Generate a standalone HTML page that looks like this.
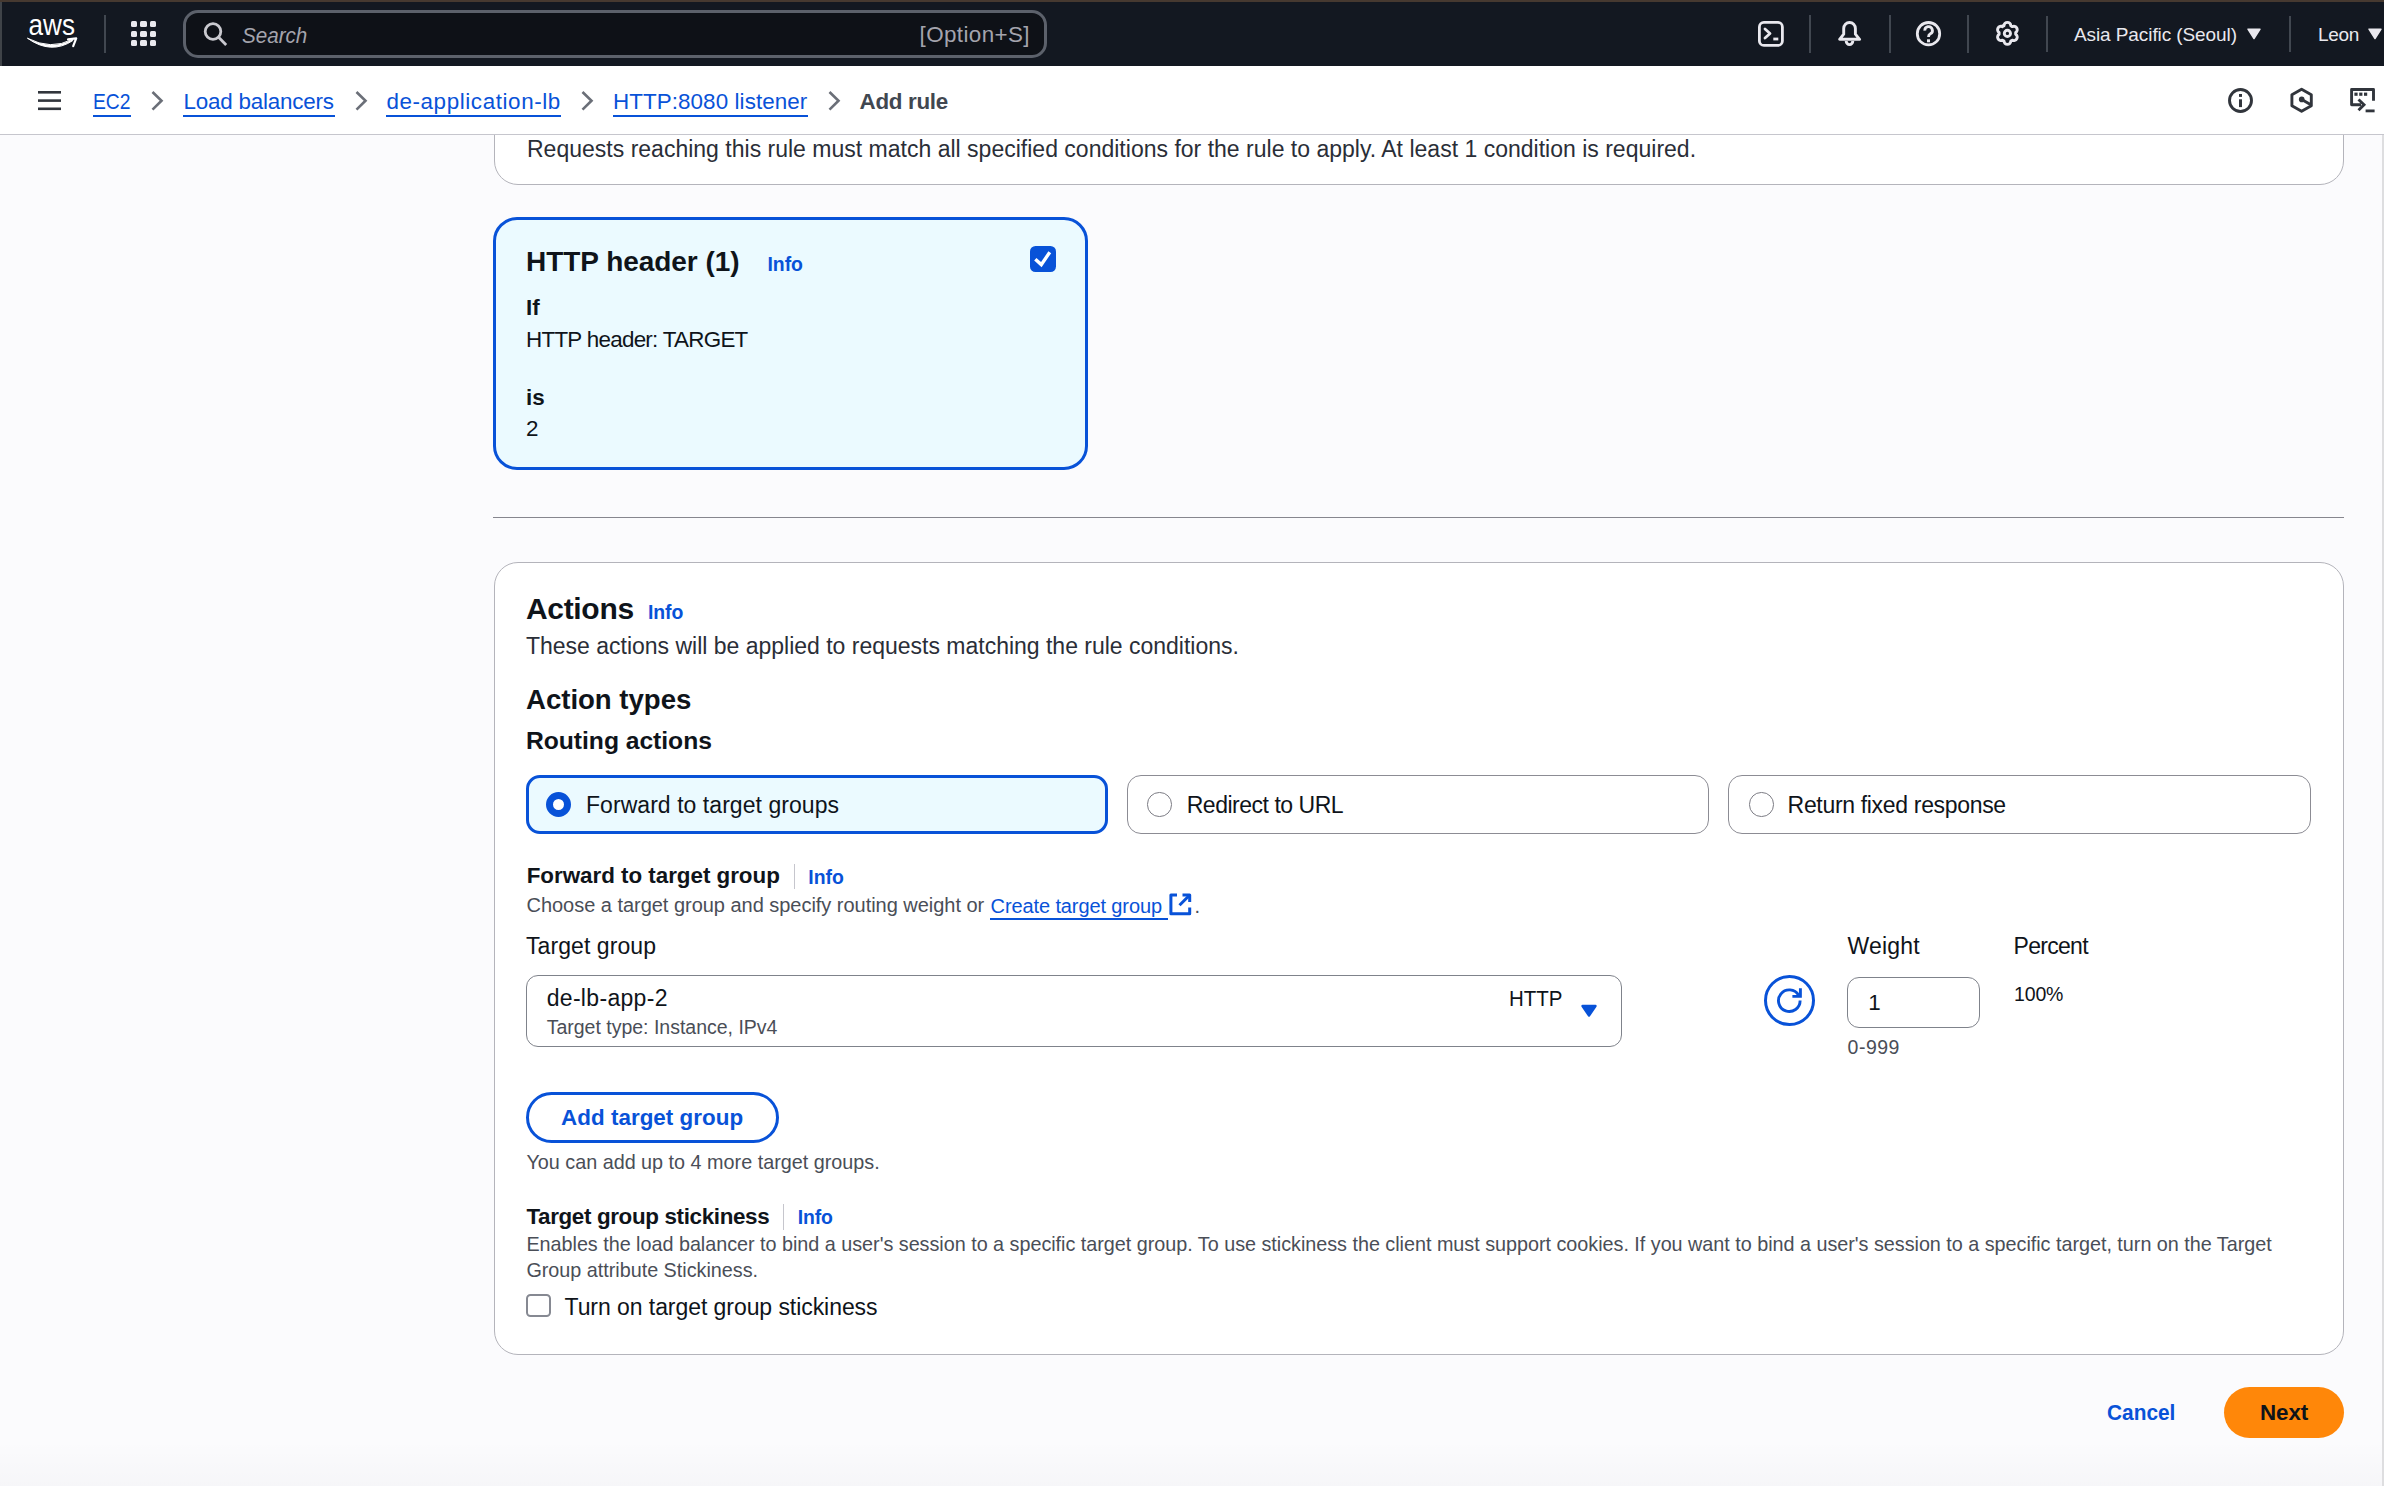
<!DOCTYPE html>
<html><head><meta charset="utf-8"><title>Add rule</title>
<style>
html,body{margin:0;padding:0;}
body{width:2384px;height:1486px;position:relative;overflow:hidden;background:#fbfbfd;font-family:"Liberation Sans",sans-serif;}
.a{position:absolute;}
.t{position:absolute;white-space:nowrap;}
svg text{font-family:"Liberation Sans",sans-serif;}
</style></head><body>
<div class="a" style="left:0px;top:0px;width:2384px;height:66.8px;background:#131821;"></div>
<div class="a" style="left:0px;top:0px;width:2384px;height:2px;background:#463930;"></div>
<div class="a" style="left:0px;top:2px;width:2px;height:64.8px;background:#3f4348;"></div>
<svg class="a" style="left:0px;top:0px" width="90" height="60" viewBox="0 0 90 60">
<text x="28.6" y="34.6" font-family="Liberation Sans" font-size="29" fill="#fff" textLength="46.4" lengthAdjust="spacingAndGlyphs">aws</text>
<path d="M27.4 38.2 Q51 55 72.8 40.6 L72.2 39.4 Q51 50.5 27.4 38.2 Z" fill="#fff" stroke="#fff" stroke-width="1" stroke-linejoin="round"/>
<path d="M68 39.4 L76.2 38.3 L73.2 46.2" stroke="#fff" stroke-width="2.2" fill="none" stroke-linejoin="round" stroke-linecap="round"/>
</svg>
<div class="a" style="left:104px;top:15px;width:2px;height:38px;background:#414750;"></div>
<div class="a" style="left:130.9px;top:21.1px;width:6.299999999999983px;height:6.299999999999997px;background:#e9e8ee;border-radius:1.5px;"></div>
<div class="a" style="left:130.9px;top:30.55px;width:6.299999999999983px;height:6.300000000000001px;background:#e9e8ee;border-radius:1.5px;"></div>
<div class="a" style="left:130.9px;top:40.0px;width:6.299999999999983px;height:6.299999999999997px;background:#e9e8ee;border-radius:1.5px;"></div>
<div class="a" style="left:140.35px;top:21.1px;width:6.300000000000011px;height:6.299999999999997px;background:#e9e8ee;border-radius:1.5px;"></div>
<div class="a" style="left:140.35px;top:30.55px;width:6.300000000000011px;height:6.300000000000001px;background:#e9e8ee;border-radius:1.5px;"></div>
<div class="a" style="left:140.35px;top:40.0px;width:6.300000000000011px;height:6.299999999999997px;background:#e9e8ee;border-radius:1.5px;"></div>
<div class="a" style="left:149.8px;top:21.1px;width:6.299999999999983px;height:6.299999999999997px;background:#e9e8ee;border-radius:1.5px;"></div>
<div class="a" style="left:149.8px;top:30.55px;width:6.299999999999983px;height:6.300000000000001px;background:#e9e8ee;border-radius:1.5px;"></div>
<div class="a" style="left:149.8px;top:40.0px;width:6.299999999999983px;height:6.299999999999997px;background:#e9e8ee;border-radius:1.5px;"></div>
<div class="a" style="left:183px;top:10px;width:864px;height:48px;box-sizing:border-box;border:3px solid #5c616b;border-radius:15px;background:#0e1117;"></div>
<svg class="a" style="left:202px;top:21px" width="27" height="27" viewBox="0 0 27 27">
<circle cx="11" cy="10.5" r="7.8" stroke="#c9c9cf" stroke-width="2.8" fill="none"/>
<path d="M16.6 16.3 L24.2 24" stroke="#c9c9cf" stroke-width="2.8" stroke-linecap="butt"/>
</svg>
<div class="t" style="left:242.00px;top:24.54px;font-size:22.4px;line-height:22.4px;color:#a4a4ad;font-style:italic;transform:scaleX(0.921);transform-origin:0.00px 0;">Search</div>
<div class="t" style="left:919.60px;top:24.04px;font-size:22.4px;line-height:22.4px;color:#a4a4ad;letter-spacing:0.388px;">[Option+S]</div>
<svg class="a" style="left:1756px;top:19px" width="30" height="30" viewBox="0 0 30 30">
<rect x="3.4" y="3.4" width="23" height="23" rx="4.5" stroke="#e9e8ee" stroke-width="2.8" fill="none"/>
<path d="M9 10 L14 14.5 L9 19" stroke="#e9e8ee" stroke-width="2.8" fill="none" stroke-linecap="round" stroke-linejoin="round"/>
<path d="M17.3 20 L22.3 20" stroke="#e9e8ee" stroke-width="2.8" stroke-linecap="butt"/>
</svg>
<div class="a" style="left:1809px;top:15px;width:2px;height:38px;background:#414750;"></div>
<svg class="a" style="left:1835px;top:19px" width="30" height="30" viewBox="0 0 30 30">
<path d="M4.6 20.3 L8.7 15.2 L8.7 9.6 A5.85 6.1 0 0 1 20.4 9.6 L20.4 15.2 L24.6 20.3 Z" stroke="#e9e8ee" stroke-width="2.9" fill="none" stroke-linejoin="round"/>
<path d="M11.2 22 A3.3 3.6 0 0 0 17.8 22" stroke="#e9e8ee" stroke-width="2.9" fill="none"/>
</svg>
<div class="a" style="left:1889px;top:15px;width:2px;height:38px;background:#414750;"></div>
<svg class="a" style="left:1913px;top:19px" width="30" height="30" viewBox="0 0 30 30">
<circle cx="15.5" cy="14.7" r="11.2" stroke="#e9e8ee" stroke-width="2.8" fill="none"/>
<path d="M11.8 11.6 A3.8 3.8 0 1 1 17.4 14.8 Q15.5 15.8 15.5 18" stroke="#e9e8ee" stroke-width="2.8" fill="none"/>
<rect x="14" y="20.3" width="3" height="3" fill="#e9e8ee"/>
</svg>
<div class="a" style="left:1967px;top:15px;width:2px;height:38px;background:#414750;"></div>
<svg class="a" style="left:1992px;top:19px" width="30" height="30" viewBox="0 0 30 30">
<path d="M10.90 6.61 L12.00 6.80 A3.4 3.4 0 0 1 18.80 6.80 L20.28 7.66 A3.4 3.4 0 0 1 23.68 13.54 L23.68 15.26 A3.4 3.4 0 0 1 20.28 21.14 L18.80 22.00 A3.4 3.4 0 0 1 12.00 22.00 L10.52 21.14 A3.4 3.4 0 0 1 7.12 15.26 L7.12 13.54 A3.4 3.4 0 0 1 10.52 7.66 Z" stroke="#e9e8ee" stroke-width="2.9" fill="none" stroke-linejoin="round"/>
<circle cx="15.4" cy="14.4" r="3.1" stroke="#e9e8ee" stroke-width="2.9" fill="none"/>
</svg>
<div class="a" style="left:2046px;top:16px;width:2px;height:36px;background:#414750;"></div>
<div class="t" style="left:2074.00px;top:25.22px;font-size:19px;line-height:19px;color:#e9e8ee;letter-spacing:-0.091px;">Asia Pacific (Seoul)</div>
<svg class="a" style="left:2246px;top:27px" width="16" height="14" viewBox="0 0 16 14"><path d="M2 2.2 L14 2.2 L8 11.5 Z" fill="#e9e8ee" stroke="#e9e8ee" stroke-width="1.5" stroke-linejoin="round"/></svg>
<div class="a" style="left:2289px;top:16px;width:2px;height:36px;background:#414750;"></div>
<div class="t" style="left:2318.00px;top:25.22px;font-size:19px;line-height:19px;color:#e9e8ee;letter-spacing:-0.292px;">Leon</div>
<svg class="a" style="left:2367px;top:27px" width="16" height="14" viewBox="0 0 16 14"><path d="M2 2.2 L14 2.2 L8 11.5 Z" fill="#e9e8ee" stroke="#e9e8ee" stroke-width="1.5" stroke-linejoin="round"/></svg>
<div class="a" style="left:0px;top:66px;width:2384px;height:69px;background:#ffffff;border-bottom:1.4px solid #c6c6cd;box-sizing:border-box;z-index:5;"></div>
<svg class="a" style="left:36px;top:88px;z-index:6" width="28" height="26" viewBox="0 0 28 26">
<rect x="2" y="3" width="23" height="2.6" fill="#31353c"/><rect x="2" y="11.3" width="23" height="2.6" fill="#31353c"/><rect x="2" y="19.5" width="23" height="2.6" fill="#31353c"/>
</svg>
<div class="t" style="left:93.30px;top:90.94px;font-size:22.4px;line-height:22.4px;color:#0852d8;transform:scaleX(0.86);transform-origin:0.00px 0;z-index:6;">EC2</div>
<div class="a" style="left:93px;top:115px;width:38px;height:2px;background:#0852d8;z-index:6;"></div>
<svg class="a" style="left:149px;top:88px;z-index:6" width="16" height="26" viewBox="0 0 16 26"><path d="M3.5 4 L12.5 12.8 L3.5 21.6" stroke="#6b6f78" stroke-width="2.6" fill="none"/></svg>
<div class="t" style="left:183.60px;top:90.94px;font-size:22.4px;line-height:22.4px;color:#0852d8;letter-spacing:-0.209px;z-index:6;">Load balancers</div>
<div class="a" style="left:183px;top:115px;width:152px;height:2px;background:#0852d8;z-index:6;"></div>
<svg class="a" style="left:352.7px;top:88px;z-index:6" width="16" height="26" viewBox="0 0 16 26"><path d="M3.5 4 L12.5 12.8 L3.5 21.6" stroke="#6b6f78" stroke-width="2.6" fill="none"/></svg>
<div class="t" style="left:386.40px;top:90.94px;font-size:22.4px;line-height:22.4px;color:#0852d8;letter-spacing:0.599px;z-index:6;">de-application-lb</div>
<div class="a" style="left:386px;top:115px;width:175px;height:2px;background:#0852d8;z-index:6;"></div>
<svg class="a" style="left:579px;top:88px;z-index:6" width="16" height="26" viewBox="0 0 16 26"><path d="M3.5 4 L12.5 12.8 L3.5 21.6" stroke="#6b6f78" stroke-width="2.6" fill="none"/></svg>
<div class="t" style="left:612.90px;top:90.94px;font-size:22.4px;line-height:22.4px;color:#0852d8;letter-spacing:0.090px;z-index:6;">HTTP:8080 listener</div>
<div class="a" style="left:613px;top:115px;width:195px;height:2px;background:#0852d8;z-index:6;"></div>
<svg class="a" style="left:825.6px;top:88px;z-index:6" width="16" height="26" viewBox="0 0 16 26"><path d="M3.5 4 L12.5 12.8 L3.5 21.6" stroke="#6b6f78" stroke-width="2.6" fill="none"/></svg>
<div class="t" style="left:859.60px;top:90.94px;font-size:22.4px;line-height:22.4px;color:#414750;font-weight:700;letter-spacing:-0.319px;z-index:6;">Add rule</div>
<svg class="a" style="left:2225px;top:85px;z-index:6" width="31" height="31" viewBox="0 0 31 31">
<circle cx="15.5" cy="15.5" r="11" stroke="#31353c" stroke-width="2.9" fill="none"/>
<rect x="14" y="9" width="3" height="2.9" fill="#31353c"/><rect x="14" y="14.3" width="3" height="7.8" fill="#31353c"/>
</svg>
<svg class="a" style="left:2287px;top:85px;z-index:6" width="31" height="31" viewBox="0 0 31 31">
<path d="M14.6 4.2 L24.3 9.7 L24.3 20.8 L14.6 26.3 L4.9 20.8 L4.9 9.7 Z" stroke="#31353c" stroke-width="2.9" fill="none" stroke-linejoin="round"/>
<circle cx="14.7" cy="14.4" r="2.8" fill="#31353c"/>
<path d="M14.7 14.4 L23.5 19.5" stroke="#31353c" stroke-width="2.9"/>
</svg>
<svg class="a" style="left:2347px;top:85px;z-index:6" width="31" height="31" viewBox="0 0 31 31">
<path d="M26.5 15.8 L26.5 4.5 L4.6 4.5 L4.6 19.8 L14 19.8" stroke="#31353c" stroke-width="2.9" fill="none" stroke-linejoin="round"/>
<rect x="7.4" y="7.6" width="3.2" height="3.2" fill="#31353c"/><rect x="12.2" y="7.6" width="3.2" height="3.2" fill="#31353c"/><rect x="17" y="7.6" width="3.2" height="3.2" fill="#31353c"/>
<path d="M11.5 14.5 L17 19.8 L11.5 25.2" stroke="#31353c" stroke-width="2.9" fill="none"/>
<rect x="18.6" y="24.5" width="9" height="2.8" fill="#31353c"/>
</svg>
<div class="a" style="left:0px;top:1440px;width:2382px;height:46px;background:linear-gradient(to bottom,rgba(0,0,30,0),rgba(0,0,30,0.018));"></div>
<div class="a" style="left:2382px;top:134px;width:2px;height:1352px;background:#dedee0;"></div>
<div class="a" style="left:493.5px;top:110px;width:1850.5px;height:74.5px;box-sizing:border-box;border:1.4px solid #b4b4bb;border-radius:24px;background:#fff;"></div>
<div class="t" style="left:527.00px;top:137.83px;font-size:23px;line-height:23px;color:#2a2e37;letter-spacing:0.008px;">Requests reaching this rule must match all specified conditions for the rule to apply. At least 1 condition is required.</div>
<div class="a" style="left:493px;top:217px;width:595px;height:253px;box-sizing:border-box;border:3px solid #0852d8;border-radius:24px;background:#ebfaff;"></div>
<div class="t" style="left:526.00px;top:247.70px;font-size:28px;line-height:28px;color:#0f141a;font-weight:700;letter-spacing:-0.043px;">HTTP header (1)</div>
<div class="t" style="left:767.50px;top:254.98px;font-size:19.4px;line-height:19.4px;color:#0852d8;font-weight:700;letter-spacing:-0.033px;">Info</div>
<svg class="a" style="left:1029px;top:245px" width="28" height="28" viewBox="0 0 28 28">
<rect x="1" y="1" width="26" height="26" rx="5.5" fill="#0852d8"/>
<path d="M6.3 14.2 L12.3 19.6 L20.8 7.2" stroke="#fff" stroke-width="3.4" fill="none"/>
</svg>
<div class="t" style="left:526.00px;top:296.54px;font-size:22.4px;line-height:22.4px;color:#0f141a;font-weight:700;">If</div>
<div class="t" style="left:526.00px;top:328.84px;font-size:22.4px;line-height:22.4px;color:#0f141a;letter-spacing:-0.717px;">HTTP header: TARGET</div>
<div class="t" style="left:526.00px;top:386.54px;font-size:22.4px;line-height:22.4px;color:#0f141a;font-weight:700;">is</div>
<div class="t" style="left:526.00px;top:418.34px;font-size:22.4px;line-height:22.4px;color:#0f141a;">2</div>
<div class="a" style="left:493px;top:517.1px;width:1851px;height:1.2999999999999545px;background:#86868e;"></div>
<div class="a" style="left:493.5px;top:562px;width:1850.5px;height:792.5px;box-sizing:border-box;border:1.4px solid #b4b4bb;border-radius:24px;background:#fff;"></div>
<div class="t" style="left:526.00px;top:594.11px;font-size:30px;line-height:30px;color:#0f141a;font-weight:700;letter-spacing:-0.325px;">Actions</div>
<div class="t" style="left:648.00px;top:603.08px;font-size:19.4px;line-height:19.4px;color:#0852d8;font-weight:700;letter-spacing:-0.100px;">Info</div>
<div class="t" style="left:526.00px;top:635.03px;font-size:23px;line-height:23px;color:#2a2e37;letter-spacing:-0.007px;">These actions will be applied to requests matching the rule conditions.</div>
<div class="t" style="left:526.00px;top:686.24px;font-size:27.6px;line-height:27.6px;color:#0f141a;font-weight:700;letter-spacing:-0.027px;">Action types</div>
<div class="t" style="left:526.00px;top:728.59px;font-size:24.7px;line-height:24.7px;color:#0f141a;font-weight:700;letter-spacing:-0.043px;">Routing actions</div>
<div class="a" style="left:526px;top:775px;width:581.5px;height:59px;box-sizing:border-box;border:3px solid #0852d8;border-radius:14px;background:#ebfaff;"></div>
<div class="a" style="left:1127px;top:775px;width:581.5px;height:59px;box-sizing:border-box;border:1.5px solid #8c8c94;border-radius:14px;background:#fff;"></div>
<div class="a" style="left:1728px;top:775px;width:583px;height:59px;box-sizing:border-box;border:1.5px solid #8c8c94;border-radius:14px;background:#fff;"></div>
<div class="a" style="left:546px;top:792px;width:25px;height:25px;box-sizing:border-box;border:7.3px solid #0852d8;border-radius:50%;background:#fff;"></div>
<div class="a" style="left:1147.3px;top:792.2px;width:24.40000000000009px;height:24.399999999999977px;box-sizing:border-box;border:1.8px solid #7d7d85;border-radius:50%;background:#fff;"></div>
<div class="a" style="left:1749.2px;top:792.2px;width:24.399999999999864px;height:24.399999999999977px;box-sizing:border-box;border:1.8px solid #7d7d85;border-radius:50%;background:#fff;"></div>
<div class="t" style="left:586.00px;top:794.03px;font-size:23px;line-height:23px;color:#0f141a;letter-spacing:0.050px;">Forward to target groups</div>
<div class="t" style="left:1186.70px;top:794.03px;font-size:23px;line-height:23px;color:#0f141a;letter-spacing:-0.475px;">Redirect to URL</div>
<div class="t" style="left:1787.60px;top:794.03px;font-size:23px;line-height:23px;color:#0f141a;letter-spacing:-0.323px;">Return fixed response</div>
<div class="t" style="left:526.70px;top:865.14px;font-size:22.4px;line-height:22.4px;color:#0f141a;font-weight:700;letter-spacing:-0.027px;">Forward to target group</div>
<div class="a" style="left:793.8px;top:864px;width:1.400000000000091px;height:25px;background:#c6c6cd;"></div>
<div class="t" style="left:808.30px;top:867.68px;font-size:19.4px;line-height:19.4px;color:#0852d8;font-weight:700;">Info</div>
<div class="t" style="left:526.50px;top:895.07px;font-size:20px;line-height:20px;color:#4a4e57;letter-spacing:-0.028px;">Choose a target group and specify routing weight or</div>
<div class="t" style="left:990.60px;top:895.57px;font-size:20px;line-height:20px;color:#0852d8;letter-spacing:-0.111px;">Create target group</div>
<div class="a" style="left:990px;top:918px;width:178px;height:2px;background:#0852d8;"></div>
<svg class="a" style="left:1167px;top:891px" width="27" height="27" viewBox="0 0 27 27">
<path d="M10 3.9 L3.9 3.9 L3.9 22.7 L22.7 22.7 L22.7 16.5" stroke="#0852d8" stroke-width="3" fill="none" stroke-linejoin="round"/>
<path d="M15.5 3.9 L22.7 3.9 L22.7 11.1" stroke="#0852d8" stroke-width="3" fill="none" stroke-linejoin="round"/>
<path d="M22.5 4.2 L12.5 14.2" stroke="#0852d8" stroke-width="3"/>
</svg>
<div class="t" style="left:1194.60px;top:895.57px;font-size:20px;line-height:20px;color:#4a4e57;">.</div>
<div class="t" style="left:526.00px;top:935.13px;font-size:23px;line-height:23px;color:#0f141a;letter-spacing:0.078px;">Target group</div>
<div class="t" style="left:1847.60px;top:935.43px;font-size:23px;line-height:23px;color:#0f141a;letter-spacing:0.163px;">Weight</div>
<div class="t" style="left:2013.50px;top:935.43px;font-size:23px;line-height:23px;color:#0f141a;letter-spacing:-0.706px;">Percent</div>
<div class="a" style="left:526px;top:975px;width:1096px;height:72px;box-sizing:border-box;border:1.5px solid #7f838b;border-radius:12px;background:#fff;"></div>
<div class="t" style="left:546.70px;top:986.93px;font-size:23px;line-height:23px;color:#0f141a;letter-spacing:0.315px;">de-lb-app-2</div>
<div class="t" style="left:546.70px;top:1017.99px;font-size:19.5px;line-height:19.5px;color:#4a4e57;letter-spacing:-0.007px;">Target type: Instance, IPv4</div>
<div class="t" style="left:1509.00px;top:987.68px;font-size:22px;line-height:22px;color:#0f141a;transform:scaleX(0.9317);transform-origin:0.00px 0;">HTTP</div>
<svg class="a" style="left:1579px;top:1002px" width="20" height="17" viewBox="0 0 20 17"><path d="M3.5 4 L16.5 4 L10 13.5 Z" fill="#0852d8" stroke="#0852d8" stroke-width="2.4" stroke-linejoin="round"/></svg>
<div class="a" style="left:1764.2px;top:975.2px;width:50.799999999999955px;height:50.799999999999955px;box-sizing:border-box;border:3px solid #0852d8;border-radius:50%;background:#fff;"></div>
<svg class="a" style="left:1775px;top:986px" width="30" height="30" viewBox="0 0 30 30">
<path d="M25.1 14.6 A10.8 10.8 0 1 1 23.6 9.2" stroke="#0852d8" stroke-width="2.9" fill="none"/>
<path d="M25.4 2.2 L25.4 10.4 L17.4 10.4" stroke="#0852d8" stroke-width="2.9" fill="none" stroke-linejoin="miter"/>
</svg>
<div class="a" style="left:1847.2px;top:977px;width:132.79999999999995px;height:50.5px;box-sizing:border-box;border:1.5px solid #7f838b;border-radius:12px;background:#fff;"></div>
<div class="t" style="left:1868.20px;top:992.44px;font-size:22.4px;line-height:22.4px;color:#0f141a;">1</div>
<div class="t" style="left:2014.00px;top:984.99px;font-size:19.5px;line-height:19.5px;color:#0f141a;letter-spacing:-0.140px;">100%</div>
<div class="t" style="left:1847.60px;top:1037.89px;font-size:19.5px;line-height:19.5px;color:#4a4e57;letter-spacing:0.495px;">0-999</div>
<div class="a" style="left:526px;top:1092px;width:253px;height:51px;box-sizing:border-box;border:3px solid #0852d8;border-radius:26px;background:#fff;"></div>
<div class="t" style="left:561.10px;top:1106.54px;font-size:22.4px;line-height:22.4px;color:#0852d8;font-weight:700;letter-spacing:0.029px;">Add target group</div>
<div class="t" style="left:526.40px;top:1152.64px;font-size:19.8px;line-height:19.8px;color:#4a4e57;letter-spacing:-0.003px;">You can add up to 4 more target groups.</div>
<div class="t" style="left:526.40px;top:1205.94px;font-size:22.4px;line-height:22.4px;color:#0f141a;font-weight:700;letter-spacing:-0.350px;">Target group stickiness</div>
<div class="a" style="left:782.8px;top:1204px;width:1.400000000000091px;height:25.5px;background:#c6c6cd;"></div>
<div class="t" style="left:797.70px;top:1208.48px;font-size:19.4px;line-height:19.4px;color:#0852d8;font-weight:700;letter-spacing:-0.100px;">Info</div>
<div class="t" style="left:526.40px;top:1235.44px;font-size:19.8px;line-height:19.8px;color:#4a4e57;letter-spacing:-0.021px;">Enables the load balancer to bind a user&#x27;s session to a specific target group. To use stickiness the client must support cookies. If you want to bind a user&#x27;s session to a specific target, turn on the Target</div>
<div class="t" style="left:526.40px;top:1261.34px;font-size:19.8px;line-height:19.8px;color:#4a4e57;letter-spacing:-0.014px;">Group attribute Stickiness.</div>
<div class="a" style="left:526.4px;top:1293.7px;width:24.200000000000045px;height:23.799999999999955px;box-sizing:border-box;border:2px solid #868992;border-radius:4.5px;background:#fff;"></div>
<div class="t" style="left:564.50px;top:1295.53px;font-size:23px;line-height:23px;color:#0f141a;letter-spacing:-0.062px;">Turn on target group stickiness</div>
<div class="t" style="left:2107.00px;top:1401.54px;font-size:22.4px;line-height:22.4px;color:#0852d8;font-weight:700;transform:scaleX(0.931);transform-origin:0.00px 0;">Cancel</div>
<div class="a" style="left:2224px;top:1387px;width:120px;height:51px;border-radius:26px;background:#ff8709;"></div>
<div class="t" style="left:2260.00px;top:1401.54px;font-size:22.4px;line-height:22.4px;color:#0f141a;font-weight:700;letter-spacing:-0.103px;">Next</div>
</body></html>
